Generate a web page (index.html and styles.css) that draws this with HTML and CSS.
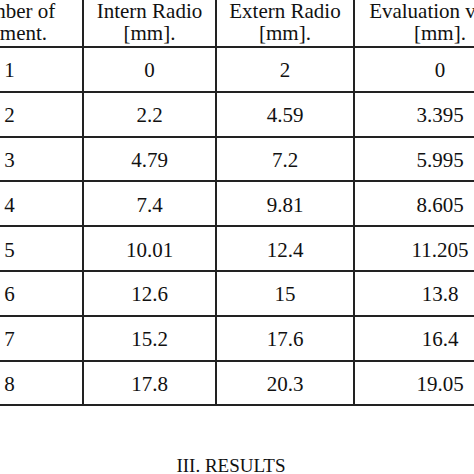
FILE: index.html
```html
<!DOCTYPE html>
<html>
<head>
    <meta charset="utf-8">
    <title>Table of element radii</title>
    <link rel="stylesheet" href="styles.css">
</head>
<body>
<div class="page">
    <table class="radii">
        <colgroup>
            <col class="c-num">
            <col class="c-in">
            <col class="c-out">
            <col class="c-eval">
        </colgroup>
        <thead>
            <tr>
                <th>Number of<br>Element.</th>
                <th>Intern Radio<br>[mm].</th>
                <th>Extern Radio<br>[mm].</th>
                <th>Evaluation value<br>[mm].</th>
            </tr>
        </thead>
        <tbody>
            <tr><td>1</td><td>0</td><td>2</td><td>0</td></tr>
            <tr><td>2</td><td>2.2</td><td>4.59</td><td>3.395</td></tr>
            <tr><td>3</td><td>4.79</td><td>7.2</td><td>5.995</td></tr>
            <tr><td>4</td><td>7.4</td><td>9.81</td><td>8.605</td></tr>
            <tr><td>5</td><td>10.01</td><td>12.4</td><td>11.205</td></tr>
            <tr><td>6</td><td>12.6</td><td>15</td><td>13.8</td></tr>
            <tr><td>7</td><td>15.2</td><td>17.6</td><td>16.4</td></tr>
            <tr><td>8</td><td>17.8</td><td>20.3</td><td>19.05</td></tr>
        </tbody>
    </table>
    <h2 class="section">III. RESULTS</h2>
</div>
</body>
</html>
```

FILE: styles.css
```css
html, body {
    margin: 0;
    background: #fff;
}

.page {
    width: 474px;
    height: 474px;
    overflow: hidden;
    font-family: "Liberation Serif", "Times New Roman", serif;
    color: #111;
}

.radii {
    border-collapse: collapse;
    table-layout: fixed;
    width: 590px;
    margin: -2px 0 0 -65px;
    font-size: 21px;
}

.c-num { width: 147px; }
.c-in { width: 133px; }
.c-out { width: 138px; }
.c-eval { width: 172px; }

.radii th,
.radii td {
    border: 2px solid #222;
    text-align: center;
    padding: 0;
}

.radii th {
    font-weight: normal;
    line-height: 22px;
    height: 42px;
    vertical-align: bottom;
    padding-bottom: 2px;
}

.radii td {
    height: 39.8px;
    padding-top: 3px;
}

.section {
    margin: 49px 0 0;
    padding-right: 12px;
    text-align: center;
    font-size: 19px;
    font-weight: normal;
    line-height: 22px;
}
```
